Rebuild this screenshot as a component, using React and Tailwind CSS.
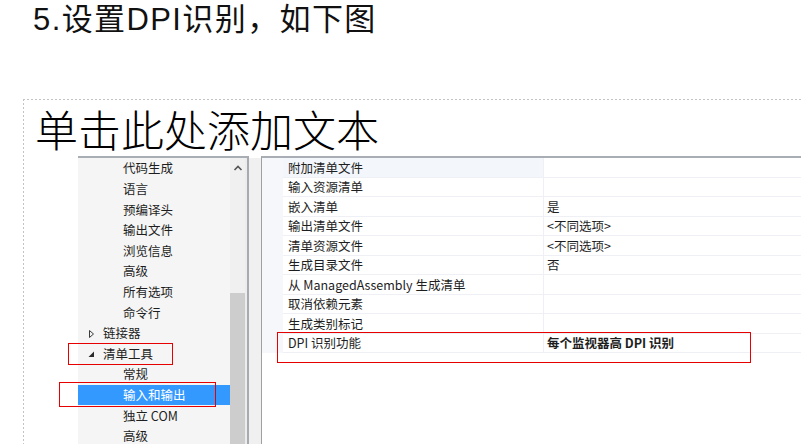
import React from "react";

const CJK = { fontFamily: '"Noto Sans CJK SC", "Noto Sans", sans-serif' };

const tree = [
  { t: "代码生成", lvl: 2 },
  { t: "语言", lvl: 2 },
  { t: "预编译头", lvl: 2 },
  { t: "输出文件", lvl: 2 },
  { t: "浏览信息", lvl: 2 },
  { t: "高级", lvl: 2 },
  { t: "所有选项", lvl: 2 },
  { t: "命令行", lvl: 2 },
  { t: "链接器", lvl: 1, icon: "closed" },
  { t: "清单工具", lvl: 1, icon: "open" },
  { t: "常规", lvl: 2 },
  { t: "输入和输出", lvl: 2, sel: true },
  { t: "独立 COM", lvl: 2 },
  { t: "高级", lvl: 2 },
];

const rows = [
  { n: "附加清单文件", v: "", hl: true },
  { n: "输入资源清单", v: "" },
  { n: "嵌入清单", v: "是" },
  { n: "输出清单文件", v: "<不同选项>" },
  { n: "清单资源文件", v: "<不同选项>" },
  { n: "生成目录文件", v: "否" },
  { n: "从 ManagedAssembly 生成清单", v: "" },
  { n: "取消依赖元素", v: "" },
  { n: "生成类别标记", v: "" },
  { n: "DPI 识别功能", v: "每个监视器高 DPI 识别", bold: true },
];

function TreeIcon({ kind }) {
  if (kind === "closed")
    return (
      <svg width="7" height="10" viewBox="0 0 7 10" className="shrink-0">
        <path d="M1.5 1.5 L5.5 5 L1.5 8.5 Z" fill="none" stroke="#3a3a3a" strokeWidth="1" />
      </svg>
    );
  return (
    <svg width="7" height="10" viewBox="0 0 7 10" className="shrink-0">
      <path d="M6 2.5 L6 8 L0.5 8 Z" fill="#2a2a2a" />
    </svg>
  );
}

export default function App() {
  return (
    <div className="w-[801px] h-[444px] overflow-hidden bg-white flex flex-col text-[#111]">
      <div
        className="h-[99px] shrink-0 pl-[33px] pt-[4px] text-[31px] leading-[31px] tracking-[1.4px] whitespace-nowrap"
        style={{ fontFamily: '"Liberation Sans", "Noto Sans CJK SC", sans-serif' }}
      >
        5.设置DPI识别，如下图
      </div>
      <div className="flex-1 ml-[23px] flex flex-col bg-no-repeat bg-[length:100%_1px,1px_100%] bg-[repeating-linear-gradient(90deg,#c4c4c4_0_2px,transparent_2px_4px),repeating-linear-gradient(180deg,#c4c4c4_0_2px,transparent_2px_4px)]">
        <div
          className="h-[57px] shrink-0 pl-[12px] pt-[5px] text-[43px] leading-[48px] font-light text-black whitespace-nowrap"
          style={CJK}
        >
          单击此处添加文本
        </div>
        <div className="relative ml-[55px] flex h-[288px] text-[12.5px] text-[#1e1e1e]" style={CJK}>
          {/* left panel */}
          <div className="w-[171px] shrink-0 flex border-t-2 border-[#a9adb4] border-r-2 border-r-[#a7aab0]">
            <div className="w-[152px] bg-[#f5f5f5] flex flex-col">
              {tree.map((it, i) => (
                <div
                  key={i}
                  className={
                    "h-[20.6px] shrink-0 flex items-center pt-[1px] whitespace-nowrap " +
                    (it.sel ? "bg-[#3399ff] text-white " : "") +
                    (it.lvl === 2 ? "pl-[45px]" : "pl-[10px] gap-[8px]")
                  }
                >
                  {it.icon && <TreeIcon kind={it.icon} />}
                  <span>{it.t}</span>
                </div>
              ))}
            </div>
            <div className="w-[15px] bg-[#f0f0f0] flex flex-col">
              <div className="h-[20px] flex items-center justify-center">
                <svg width="10" height="8" viewBox="0 0 10 8">
                  <path d="M1.5 6 L5 2.5 L8.5 6" fill="none" stroke="#555" strokeWidth="1.6" />
                </svg>
              </div>
              <div className="h-[115px]" />
              <div className="flex-1 bg-[#cdcdcd]" />
            </div>
            <div className="w-[2px] bg-[#ececec]" />
          </div>
          {/* gap */}
          <div className="w-[12px] shrink-0 bg-[#f0f0f0] border-t-2 border-white" />
          {/* right panel */}
          <div className="flex-1 border-l border-[#a0a0a0] border-t-2 border-t-[#a9adb4] bg-white flex flex-col">
            {rows.map((r, i) => (
              <div key={i} className="h-[19.5px] shrink-0 flex">
                <div className="w-[21px] shrink-0 bg-[#f5f7fb]" />
                <div
                  className={
                    "w-[260px] shrink-0 border-b border-[#eef0f5] pl-[5px] pt-[2px] flex items-center whitespace-nowrap " +
                    (r.hl ? "bg-[#f3f6fb]" : "")
                  }
                >
                  {r.n}
                </div>
                <div
                  className={
                    "flex-1 border-b border-l border-[#eef0f5] pl-[3px] pt-[2px] flex items-center whitespace-nowrap " +
                    (r.bold ? "font-bold" : "")
                  }
                >
                  {r.v}
                </div>
              </div>
            ))}
          </div>
          {/* red annotation boxes */}
          <div className="absolute left-[-10px] top-[187px] w-[105px] h-[22px] border border-[#e60000]" />
          <div className="absolute left-[-19px] top-[226px] w-[157px] h-[25px] border border-[#e60000]" />
          <div className="absolute left-[199px] top-[176px] w-[474px] h-[31px] border border-[#e60000]" />
        </div>
      </div>
    </div>
  );
}
